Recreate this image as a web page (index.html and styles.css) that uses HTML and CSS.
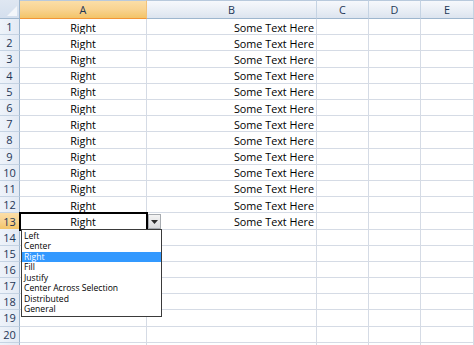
FILE: index.html
```html
<!DOCTYPE html>
<html>
<head>
<meta charset="utf-8">
<link rel="stylesheet" href="styles.css">
</head>
<body>
<div class="sheet">
  <div class="row head">
    <div class="corner"><svg width="10" height="10" viewBox="0 0 10 10"><polygon points="10,0 10,10 0,10" fill="#f3f6fa"/></svg></div>
    <div class="ch active">A</div>
    <div class="ch">B</div>
    <div class="ch">C</div>
    <div class="ch">D</div>
    <div class="ch">E</div>
  </div>
  <div class="row"><div class="rh">1</div><div class="c a">Right</div><div class="c b">Some Text Here</div><div class="c"></div><div class="c"></div><div class="c"></div></div>
  <div class="row"><div class="rh">2</div><div class="c a">Right</div><div class="c b">Some Text Here</div><div class="c"></div><div class="c"></div><div class="c"></div></div>
  <div class="row"><div class="rh">3</div><div class="c a">Right</div><div class="c b">Some Text Here</div><div class="c"></div><div class="c"></div><div class="c"></div></div>
  <div class="row"><div class="rh">4</div><div class="c a">Right</div><div class="c b">Some Text Here</div><div class="c"></div><div class="c"></div><div class="c"></div></div>
  <div class="row"><div class="rh">5</div><div class="c a">Right</div><div class="c b">Some Text Here</div><div class="c"></div><div class="c"></div><div class="c"></div></div>
  <div class="row"><div class="rh">6</div><div class="c a">Right</div><div class="c b">Some Text Here</div><div class="c"></div><div class="c"></div><div class="c"></div></div>
  <div class="row"><div class="rh">7</div><div class="c a">Right</div><div class="c b">Some Text Here</div><div class="c"></div><div class="c"></div><div class="c"></div></div>
  <div class="row"><div class="rh">8</div><div class="c a">Right</div><div class="c b">Some Text Here</div><div class="c"></div><div class="c"></div><div class="c"></div></div>
  <div class="row"><div class="rh">9</div><div class="c a">Right</div><div class="c b">Some Text Here</div><div class="c"></div><div class="c"></div><div class="c"></div></div>
  <div class="row"><div class="rh">10</div><div class="c a">Right</div><div class="c b">Some Text Here</div><div class="c"></div><div class="c"></div><div class="c"></div></div>
  <div class="row"><div class="rh">11</div><div class="c a">Right</div><div class="c b">Some Text Here</div><div class="c"></div><div class="c"></div><div class="c"></div></div>
  <div class="row"><div class="rh">12</div><div class="c a">Right</div><div class="c b">Some Text Here</div><div class="c"></div><div class="c"></div><div class="c"></div></div>
  <div class="row"><div class="rh active">13</div><div class="c a sel">Right</div><div class="c b">Some Text Here</div><div class="c"></div><div class="c"></div><div class="c"></div></div>
  <div class="row"><div class="rh">14</div><div class="c a"></div><div class="c b"></div><div class="c"></div><div class="c"></div><div class="c"></div></div>
  <div class="row"><div class="rh">15</div><div class="c a"></div><div class="c b"></div><div class="c"></div><div class="c"></div><div class="c"></div></div>
  <div class="row"><div class="rh">16</div><div class="c a"></div><div class="c b"></div><div class="c"></div><div class="c"></div><div class="c"></div></div>
  <div class="row"><div class="rh">17</div><div class="c a"></div><div class="c b"></div><div class="c"></div><div class="c"></div><div class="c"></div></div>
  <div class="row"><div class="rh">18</div><div class="c a"></div><div class="c b"></div><div class="c"></div><div class="c"></div><div class="c"></div></div>
  <div class="row"><div class="rh">19</div><div class="c a"></div><div class="c b"></div><div class="c"></div><div class="c"></div><div class="c"></div></div>
  <div class="row"><div class="rh">20</div><div class="c a"></div><div class="c b"></div><div class="c"></div><div class="c"></div><div class="c"></div></div>
  <div class="row"><div class="rh"></div><div class="c a"></div><div class="c b"></div><div class="c"></div><div class="c"></div><div class="c"></div></div>

  <div class="dd-btn"><svg width="7" height="4" viewBox="0 0 7 4"><polygon points="0,0 7,0 3.5,4" fill="#2b2b2b"/></svg></div>
  <ul class="dd-list">
    <li>Left</li>
    <li>Center</li>
    <li class="hl">Right</li>
    <li>Fill</li>
    <li>Justify</li>
    <li>Center Across Selection</li>
    <li>Distributed</li>
    <li>General</li>
  </ul>
</div>
</body>
</html>
```
FILE: styles.css
```css
html, body {
  margin: 0;
  padding: 0;
  background: #fff;
  overflow: hidden;
}
.sheet {
  position: relative;
  width: 474px;
  height: 345px;
  overflow: hidden;
  font-family: "Open Sans", sans-serif;
  font-size: 10.8px;
  color: #000;
}
.row {
  display: grid;
  grid-template-columns: 20px 127px 170px 52px 52px 53px;
  height: 16.2px;
}
.row.head {
  height: 19px;
}
.corner {
  box-sizing: border-box;
  background: linear-gradient(#dfe7f2, #d4dfee);
  border-right: 1px solid #9eb6ce;
  border-bottom: 1px solid #9eb6ce;
  display: flex;
  align-items: flex-end;
  justify-content: flex-end;
  padding: 0 2px 2px 0;
}
.corner svg { display: block; }
.ch {
  box-sizing: border-box;
  background: linear-gradient(#f6f8fc 0%, #e9eef5 55%, #dce4ef 100%);
  border-right: 1px solid #c5d3e3;
  border-bottom: 1px solid #9eb6ce;
  border-top: 1px solid #b8c9dc;
  color: #1e3656;
  display: flex;
  align-items: center;
  justify-content: center;
  font-size: 10.8px;
}
.ch.active {
  background: linear-gradient(#fbdea7 0%, #f8d391 50%, #f3c468 100%);
  border-bottom-color: #f29536;
  border-right-color: #f2c27a;
}
.rh {
  box-sizing: border-box;
  background: linear-gradient(90deg, #eef3fa, #e3eaf4);
  border-right: 1px solid #9eb6ce;
  border-bottom: 1px solid #c5d3e3;
  color: #1e3656;
  display: flex;
  align-items: center;
  justify-content: center;
  font-size: 11px;
}
.rh.active {
  background: linear-gradient(#fbdea7 0%, #f8d391 50%, #f3c468 100%);
  border-right-color: #f29536;
}
.c {
  box-sizing: border-box;
  border-right: 1px solid #d5dbe5;
  border-bottom: 1px solid #d5dbe5;
  display: flex;
  align-items: center;
  padding-top: 1px;
  white-space: nowrap;
  overflow: hidden;
}
.c.a { justify-content: center; }
.c.b { justify-content: flex-end; padding-right: 2px; }
.c.sel {
  outline: 2px solid #000;
  outline-offset: -1px;
  position: relative;
  z-index: 1;
  overflow: visible;
}
.dd-btn {
  position: absolute;
  left: 148px;
  top: 214px;
  width: 13px;
  height: 15px;
  box-sizing: border-box;
  border: 1px solid #a7abb0;
  background: linear-gradient(#f4f4f4, #d9dadc);
  display: flex;
  align-items: center;
  justify-content: center;
  z-index: 2;
}
.dd-btn svg { display: block; }
.dd-list {
  position: absolute;
  left: 21px;
  top: 229px;
  width: 141px;
  margin: 0;
  padding: 1px 0;
  list-style: none;
  box-sizing: border-box;
  background: #fff;
  border: 1px solid #3a3a3a;
  font-family: "Open Sans", sans-serif;
  font-size: 8.6px;
  z-index: 3;
}
.dd-list li {
  height: 10.45px;
  line-height: 10.45px;
  padding-left: 2px;
  white-space: nowrap;
}
.dd-list li.hl {
  background: #3399ff;
  color: #fff;
}
```
